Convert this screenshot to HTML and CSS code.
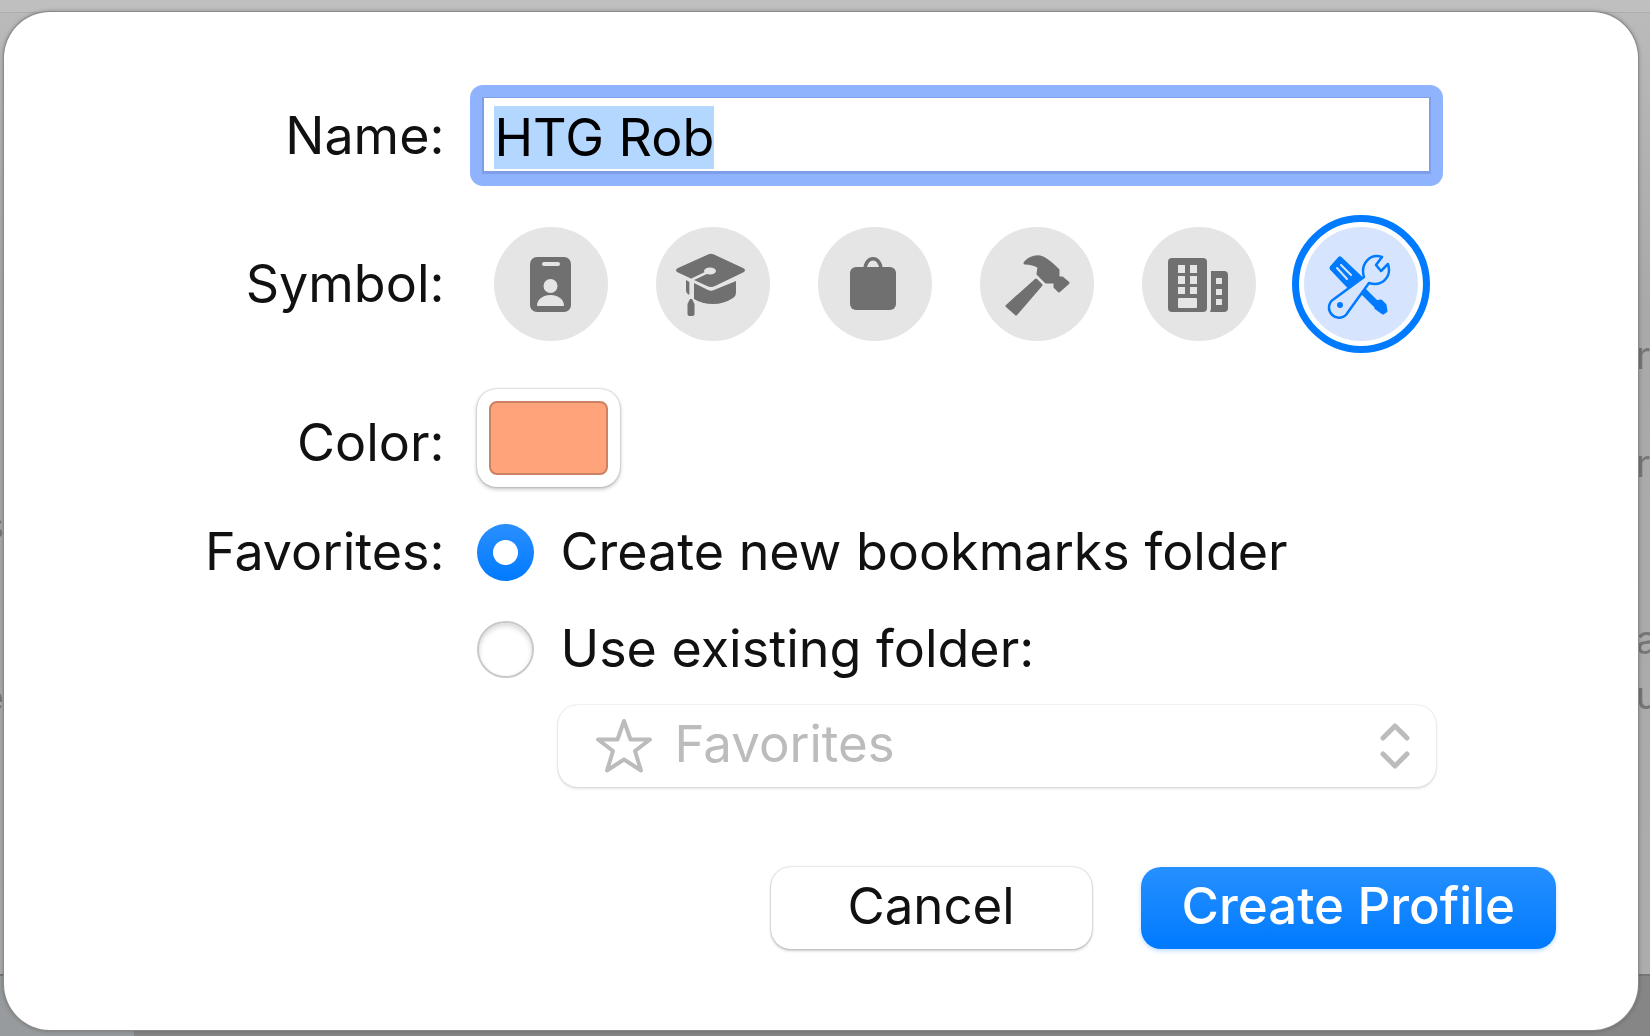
FILE: index.html
```
<!DOCTYPE html>
<html lang="en">
<head>
  <meta charset="UTF-8">
  <meta name="viewport" content="width=device-width, initial-scale=1.0">
  <title>New Profile</title>
  <link rel="stylesheet" href="styles.css">
</head>
<body>

  <!-- Dimmed window behind the sheet -->
  <div class="backdrop" aria-hidden="true">
    <div class="backdrop-toolbar"></div>
    <div class="backdrop-page">
      <span class="peek peek-left peek-l1">s</span>
      <span class="peek peek-left peek-l2">e</span>
      <span class="peek peek-right peek-r1">r</span>
      <span class="peek peek-right peek-r2">re</span>
      <span class="peek peek-right peek-r3">a</span>
      <span class="peek peek-right peek-r4">u</span>
    </div>
    <div class="backdrop-dock"></div>
  </div>

  <form class="sheet">
    <!-- Name -->
    <div class="row">
      <label class="row-label" for="name">Name:</label>
      <div class="focus-ring">
        <input class="name-input" id="name" type="text" value="HTG Rob" autocomplete="off" spellcheck="false" autofocus>
      </div>
    </div>

    <!-- Symbol -->
    <div class="row symbol-row" role="radiogroup" aria-labelledby="symbol-label">
      <span class="row-label" id="symbol-label">Symbol:</span>
      <div class="symbols">
        <label class="symbol">
          <input type="radio" name="symbol" value="badge" aria-label="Badge">
          <svg viewBox="0 0 114 114">
            <rect x="36" y="30" width="41" height="55" rx="7" fill="currentColor"/>
            <rect x="48" y="35" width="18" height="4" rx="2" fill="#e5e5e5"/>
            <circle cx="56.500" cy="59" r="7" fill="#e5e5e5"/>
            <path d="M43 79 C43 72 49 68 56.500 68 C64 68 70 72 70 79 Z" fill="#e5e5e5"/>
          </svg>
        </label>
        <label class="symbol">
          <input type="radio" name="symbol" value="school" aria-label="School">
          <svg viewBox="0 0 114 114">
            <path d="M30 53 L33.500 55 V68 C31 67 30 65 30 63 Z" fill="currentColor"/>
            <path d="M38 56 L52 63 Q55 64.500 58 63 L80 54 V66 Q80 69 77 71 Q68 77 57 77 Q46 77 38 72 Z" fill="currentColor"/>
            <path d="M22 41 L52 27.500 Q55 26 58 27.500 L87 41 Q91 43 87 45.500 L59 59 Q55 61 51 59 L22 45.500 Q18 43 22 41 Z" fill="currentColor"/>
            <path d="M54 44 L37 52 Q35 53 35 56 V74" fill="none" stroke="#e5e5e5" stroke-width="2.500"/>
            <ellipse cx="54" cy="44" rx="6" ry="3.500" fill="#e5e5e5"/>
            <path d="M34 72 H36 L38.500 77 V87 Q38.500 89 36.500 89 H33.500 Q31.500 89 31.500 87 V77 Z" fill="currentColor"/>
          </svg>
        </label>
        <label class="symbol">
          <input type="radio" name="symbol" value="bag" aria-label="Shopping bag">
          <svg viewBox="0 0 114 114">
            <path d="M47 43 C47 28 63 28 63 43" fill="none" stroke="currentColor" stroke-width="3.500"/>
            <rect x="32" y="40" width="46" height="43" rx="6" fill="currentColor"/>
          </svg>
        </label>
        <label class="symbol">
          <input type="radio" name="symbol" value="hammer" aria-label="Hammer">
          <svg viewBox="0 0 114 114" stroke="currentColor" stroke-linejoin="round">
            <path d="M56 53 L61 58 L36 87 L27 79 Z" fill="currentColor" stroke-width="3"/>
            <path d="M45 36 Q51 29 60 30 Q66 31 78 43 L78 51 L82 51 L88 56 L79 64 L75 60 L75 55 L66 55 L58 47 L59 40 Q53 36 45 36 Z" fill="currentColor" stroke-width="3"/>
          </svg>
        </label>
        <label class="symbol">
          <input type="radio" name="symbol" value="building" aria-label="Building">
          <svg viewBox="0 0 114 114">
            <rect x="26" y="31" width="39" height="54" rx="4" fill="currentColor"/>
            <path d="M69 44 H82 Q86 44 86 48 V81 Q86 85 82 85 H68 Q69 83 69 81 Z" fill="currentColor"/>
            <g fill="#e5e5e5">
              <rect x="36" y="38" width="7" height="8"/>
              <rect x="48" y="38" width="7" height="8"/>
              <rect x="36" y="49" width="7" height="8"/>
              <rect x="48" y="49" width="7" height="8"/>
              <rect x="36" y="60" width="7" height="7"/>
              <rect x="48" y="60" width="7" height="7"/>
              <rect x="36" y="71" width="19" height="10" rx="1"/>
              <rect x="74" y="51" width="6" height="6"/>
              <rect x="74" y="62" width="6" height="6"/>
              <rect x="74" y="72" width="6" height="6"/>
            </g>
          </svg>
        </label>
        <label class="symbol">
          <input type="radio" name="symbol" value="tools" aria-label="Tools" checked>
          <svg viewBox="0 0 114 114" stroke-linejoin="round" stroke-linecap="round">
            <!-- screwdriver -->
            <path d="M28 41 L36 32 L56 51 L46 60 Z" fill="currentColor" stroke="currentColor" stroke-width="5"/>
            <path d="M33 41 L43 52 M37 38 L47 48" stroke="#d6e5fd" stroke-width="2"/>
            <path d="M54 59 L72 77" stroke="currentColor" stroke-width="7" stroke-linecap="butt"/>
            <path d="M70 75 L77 74 L81 78 L82 84 L79 86 L72 81 Z" fill="currentColor" stroke="currentColor" stroke-width="3"/>
            <!-- wrench -->
            <path d="M78 30 C66 26 56 37 60 50 L30 72 A10 10 0 1 0 44 85 L65 56 C78 60 88 50 84 37 L77 44 L72 38 Z" fill="#d6e5fd" stroke="currentColor" stroke-width="2.500"/>
            <circle cx="36" cy="78" r="3" fill="currentColor"/>
          </svg>
        </label>
      </div>
    </div>

    <!-- Color -->
    <div class="row color-row">
      <label class="row-label" for="color">Color:</label>
      <input class="color-well" id="color" type="color" value="#ffa37a">
    </div>

    <!-- Favorites -->
    <div class="row favorites-row" role="radiogroup" aria-labelledby="favorites-label">
      <span class="row-label" id="favorites-label">Favorites:</span>
      <div class="choices">
        <label class="choice">
          <input type="radio" name="favorites" value="new" checked>
          Create new bookmarks folder
        </label>
        <label class="choice">
          <input type="radio" name="favorites" value="existing">
          Use existing folder:
        </label>
        <div class="popup">
          <select class="popup-select" aria-label="Existing folder" disabled>
            <option>Favorites</option>
          </select>
          <svg class="popup-star" viewBox="0 0 58 56">
            <path d="M29 3 L35.500 21.500 H55 L40 33 L46 52.500 L29 41.500 L12 52.500 L18 33 L3 21.500 H22.500 Z"/>
          </svg>
          <svg class="popup-arrows" viewBox="0 0 30 46">
            <path d="M3 15 L15 3 L27 15 M3 31 L15 43 L27 31"/>
          </svg>
        </div>
      </div>
    </div>

    <!-- Buttons -->
    <div class="actions">
      <button class="button" type="button">Cancel</button>
      <button class="button button-primary" type="submit">Create Profile</button>
    </div>
  </form>

  <script>
    document.addEventListener('DOMContentLoaded', function () {
      const nameInput = document.getElementById('name');
      nameInput.focus();
      nameInput.select();
    });
  </script>
</body>
</html>
```
FILE: styles.css
```
/* General Styles */
* {
  box-sizing: border-box;
}

body {
  margin: 0;
  min-height: 100vh;
  padding: 12px 12px 6px 4px;
  display: flex;
  font-family: Inter, "Liberation Sans", sans-serif;
  font-size: 52px;
  line-height: 64px;
  color: #111111;
  overflow: hidden;
}

input,
select,
button {
  font: inherit;
  color: inherit;
  margin: 0;
}

/* Window behind the sheet */
.backdrop {
  position: fixed;
  inset: 0;
  z-index: -1;
  display: flex;
  flex-direction: column;
}

.backdrop-toolbar {
  height: 13px;
  background: #bfbfbf;
  border-bottom: 1px solid #adadad;
}

.backdrop-page {
  flex: 1;
  position: relative;
  background: linear-gradient(#bababa, #a9a9a9 300px, #adadad);
}

.backdrop-dock {
  height: 62px;
  border-top: 2px solid #777777;
  background: linear-gradient(90deg, #989b9d 134px, #868686 134px);
}

/* Letters showing past the edges of the sheet */
.peek {
  position: absolute;
  font-size: 38px;
  line-height: 40px;
  color: #777777;
}

.peek-left {
  right: calc(100% - 4px);
}

.peek-right {
  left: calc(100% - 14px);
}

.peek-l1 { top: 492px; }
.peek-l2 { top: 664px; }
.peek-r1 { top: 322px; }
.peek-r2 { top: 430px; }
.peek-r3 { top: 606px; }
.peek-r4 { top: 662px; }

/* Sheet */
.sheet {
  flex: 1;
  display: flex;
  flex-direction: column;
  padding: 73px 82px 81px 0;
  background: #ffffff;
  border-radius: 46px;
  box-shadow: 0 0 0 1px #8a8a8a, 0 0 5px rgba(0, 0, 0, 0.4);
}

.row {
  display: grid;
  grid-template-columns: minmax(0, 5fr) minmax(0, 12fr);
  align-items: center;
}

.row-label {
  padding-right: 16px;
  text-align: right;
}

/* Name */
.focus-ring {
  display: flex;
  margin: 0 113px 0 10px;
  padding: 12px;
  border-radius: 13px;
  background: #8fb3fc;
}

.name-input {
  flex: 1;
  min-width: 0;
  height: 77px;
  padding: 6px 10px 0;
  border: 2px solid #7d9fe9;
  border-width: 1px 2px 3px;
  outline: none;
  background: #ffffff;
  color: #000000;
}

.name-input::selection {
  background: #b3d7ff;
  color: #000000;
}

/* Symbol */
.symbol-row {
  margin-top: 29px;
}

.symbols {
  display: flex;
  gap: 24px;
  padding-left: 22px;
}

.symbol {
  position: relative;
  display: flex;
  padding: 5px;
  border: 7px solid transparent;
  border-radius: 50%;
  color: #707070;
}

.symbol input {
  position: absolute;
  inset: 0;
  width: 100%;
  height: 100%;
  opacity: 0;
}

.symbol svg {
  width: 114px;
  height: 114px;
  border-radius: 50%;
  background: #e5e5e5;
}

.symbol:has(input:checked) {
  border-color: #007aff;
  color: #007aff;
}

.symbol input:checked + svg {
  background: #d6e5fd;
}

/* Color */
.color-row {
  min-height: 108px;
  margin-top: 36px;
}

.color-well {
  align-self: start;
  width: 143px;
  height: 98px;
  margin-left: 17px;
  padding: 12px;
  appearance: none;
  border: none;
  border-radius: 20px;
  background: #ffffff;
  box-shadow: 0 0 2px rgba(0, 0, 0, 0.3), 0 2px 4px rgba(0, 0, 0, 0.25);
}

.color-well::-webkit-color-swatch-wrapper {
  padding: 0;
}

.color-well::-webkit-color-swatch {
  border: 2px solid #cc8262;
  border-radius: 8px;
}

/* Favorites */
.favorites-row {
  align-items: start;
  margin-top: 23px;
}

.choices {
  display: flex;
  flex-direction: column;
  gap: 33px;
  padding-left: 17px;
}

.choice {
  display: flex;
  align-items: center;
  gap: 26px;
}

.choice input {
  width: 57px;
  height: 57px;
  appearance: none;
  border: 2px solid #c9c9c9;
  border-radius: 50%;
  background: #ffffff;
  box-shadow: inset 0 3px 5px rgba(0, 0, 0, 0.15);
}

.choice input:checked {
  border: none;
  background: radial-gradient(circle, #ffffff 12px, transparent 13px), linear-gradient(#2a8fff, #007aff);
  box-shadow: none;
}

.popup {
  position: relative;
  display: flex;
  margin: -9px 120px 0 81px;
}

.popup-select {
  flex: 1;
  height: 82px;
  padding: 0 80px 4px 116px;
  appearance: none;
  border: none;
  border-radius: 20px;
  background: #ffffff;
  box-shadow: 0 0 2px rgba(0, 0, 0, 0.2), 0 2px 3px rgba(0, 0, 0, 0.1);
  font-size: 51px;
}

.popup-select:disabled {
  color: #bcbcbc;
  opacity: 1;
}

.popup-star,
.popup-arrows {
  position: absolute;
  fill: none;
  stroke: #bcbcbc;
  stroke-linejoin: round;
  stroke-linecap: round;
  pointer-events: none;
}

.popup-star {
  left: 37px;
  top: 13px;
  width: 58px;
  height: 56px;
  stroke-width: 4px;
}

.popup-arrows {
  right: 26px;
  top: 18px;
  width: 30px;
  height: 46px;
  stroke-width: 5px;
}

/* Buttons */
.actions {
  display: flex;
  justify-content: flex-end;
  gap: 49px;
  margin-top: auto;
}

.button {
  min-width: 321px;
  height: 82px;
  padding: 0 41px 4px;
  border: none;
  border-radius: 20px;
  background: #ffffff;
  color: #111111;
  box-shadow: 0 0 2px rgba(0, 0, 0, 0.3), 0 2px 3px rgba(0, 0, 0, 0.2);
  font-size: 51px;
}

.button-primary {
  background: linear-gradient(#2690ff, #007aff);
  color: #ffffff;
  font-weight: 500;
  box-shadow: 0 2px 4px rgba(0, 122, 255, 0.25);
}
```
